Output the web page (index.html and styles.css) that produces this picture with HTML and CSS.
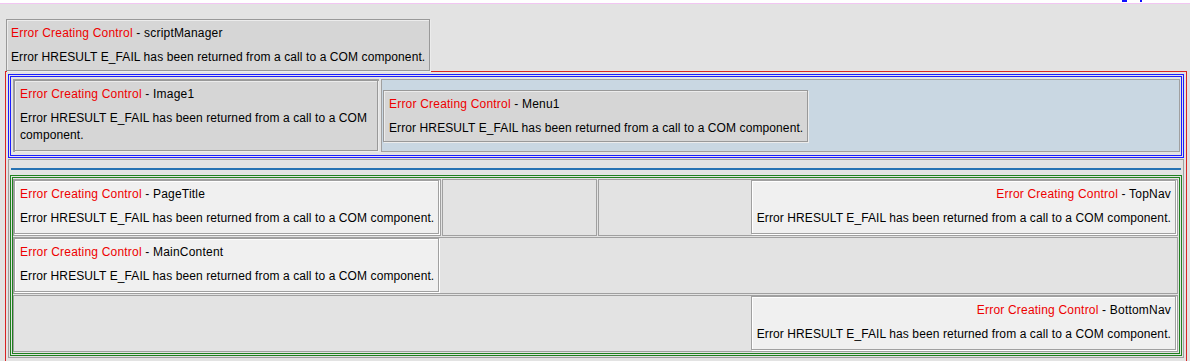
FILE: index.html
```html
<!DOCTYPE html>
<html lang="en">
<head>
    <meta charset="UTF-8">
    <title>Default.aspx - Design</title>
    <link rel="stylesheet" href="styles.css">
</head>
<body>
    <div class="topbar">
        <span class="mark wide"></span>
        <span class="mark"></span>
    </div>

    <div class="err dark top-err">
        <div class="err-title"><span class="red">Error Creating Control</span> - scriptManager</div>
        <div class="err-msg">Error HRESULT E_FAIL has been returned from a call to a COM component.</div>
    </div>

    <div class="frame-red">
        <div class="frame-blue">
            <div class="cell img-cell">
                <div class="err dark">
                    <div class="err-title"><span class="red">Error Creating Control</span> - Image1</div>
                    <div class="err-msg">Error HRESULT E_FAIL has been returned from a call to a COM component.</div>
                </div>
            </div>
            <div class="cell menu-cell">
                <div class="err dark">
                    <div class="err-title"><span class="red">Error Creating Control</span> - Menu1</div>
                    <div class="err-msg">Error HRESULT E_FAIL has been returned from a call to a COM component.</div>
                </div>
            </div>
        </div>

        <div class="frame-gray">
            <div class="rule"></div>
            <div class="frame-green">
                <div class="row row-top">
                    <div class="cell">
                        <div class="err light">
                            <div class="err-title"><span class="red">Error Creating Control</span> - PageTitle</div>
                            <div class="err-msg">Error HRESULT E_FAIL has been returned from a call to a COM component.</div>
                        </div>
                    </div>
                    <div class="cell"></div>
                    <div class="cell to-right">
                        <div class="err light align-right">
                            <div class="err-title"><span class="red">Error Creating Control</span> - TopNav</div>
                            <div class="err-msg">Error HRESULT E_FAIL has been returned from a call to a COM component.</div>
                        </div>
                    </div>
                </div>
                <div class="row">
                    <div class="cell">
                        <div class="err light">
                            <div class="err-title"><span class="red">Error Creating Control</span> - MainContent</div>
                            <div class="err-msg">Error HRESULT E_FAIL has been returned from a call to a COM component.</div>
                        </div>
                    </div>
                </div>
                <div class="row">
                    <div class="cell to-right">
                        <div class="err light align-right">
                            <div class="err-title"><span class="red">Error Creating Control</span> - BottomNav</div>
                            <div class="err-msg">Error HRESULT E_FAIL has been returned from a call to a COM component.</div>
                        </div>
                    </div>
                </div>
            </div>
        </div>
    </div>
</body>
</html>
```

FILE: styles.css
```css
body {
    margin: 0;
    background: #e3e3e3;
    font-family: "Liberation Sans", Arial, sans-serif;
    font-size: 12px;
    color: #000;
    height: 361px;
    overflow: hidden;
}

.topbar {
    height: 3px;
    background: #fff;
    border-bottom: 1px solid #f2c6f2;
    display: flex;
    justify-content: flex-end;
    padding-right: 48px;
}

.mark {
    width: 2px;
    height: 2px;
    background: #1010ff;
}

.mark.wide {
    width: 5px;
    margin-right: 13px;
}

/* error placeholder boxes */
.err {
    border: 1px solid #a0a0a0;
    box-shadow: inset 1px 1px 0 #fff, 1px 1px 0 #fff;
    padding: 5px 4px 4px 5px;
    box-sizing: border-box;
}

.err.dark {
    background: #d6d6d6;
    border-color: #999;
    box-shadow: inset 1px 1px 0 #ececec, 1px 1px 0 #ececec;
}

.err.light {
    background: #f0f0f0;
}

.err-title {
    line-height: 17px;
    white-space: nowrap;
    letter-spacing: 0.2px;
}

.err-msg {
    margin-top: 7px;
    line-height: 17px;
    letter-spacing: 0.1px;
}

.red {
    color: #ee0000;
}

.align-right .err-title {
    text-align: right;
}

.top-err {
    display: inline-block;
    margin: 15px 0 0 6px;
    padding-left: 4px;
    vertical-align: top;
}

/* nested designer frames */
.frame-red {
    margin-left: 5px;
    width: 1182px;
    box-sizing: border-box;
    border: 1px solid #d82424;
    padding: 2px 2px 4px;
    display: flex;
    flex-direction: column;
    gap: 1px;
}

.frame-blue {
    border: 3px double #1c1cff;
    padding: 2px 1px 3px 2px;
    display: grid;
    grid-template-columns: 366px 1fr;
    gap: 2px;
}

.cell {
    border: 1px solid #a0a0a0;
    display: flex;
}

.img-cell .err {
    flex: 1;
    padding-bottom: 6px;
}

.menu-cell {
    background: #c9d7e2;
    align-items: center;
    padding-left: 1px;
}

.frame-gray {
    border: 1px solid #a0a0a0;
    padding: 8px 1px 1px;
}

.rule {
    height: 2px;
    background: #2873b3;
    margin: 0 1px 5px;
}

.frame-green {
    border: 3px double #1f801f;
    padding: 1px 1px 1px 0;
    display: flex;
    flex-direction: column;
    gap: 1px;
}

.row {
    display: grid;
    grid-template-columns: 1fr;
    height: 57px;
}

.row-top {
    grid-template-columns: 428px 155px 1fr;
    gap: 1px;
}

.row .cell {
    padding: 0 1px 1px 0;
}

.row .err {
    flex: none;
}

.to-right {
    justify-content: flex-end;
}
```
